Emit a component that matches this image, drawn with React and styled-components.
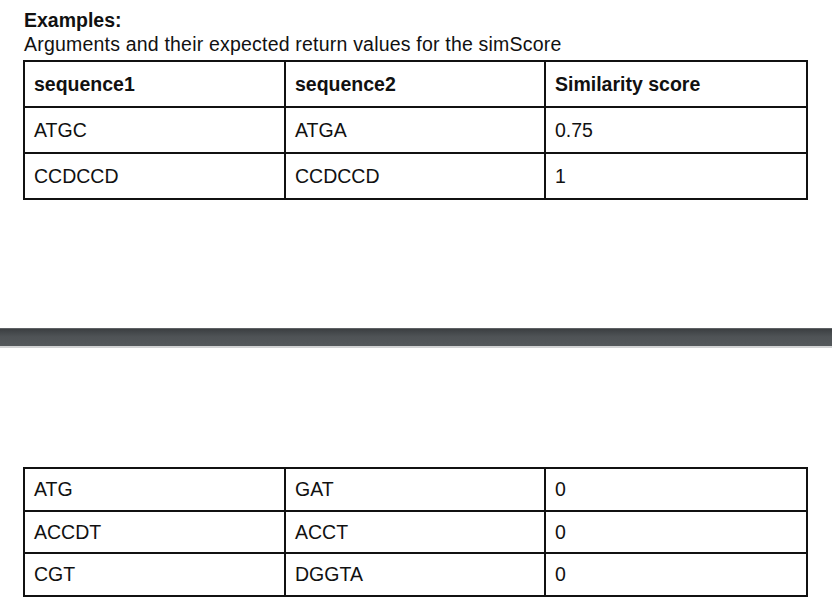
import React from 'react'
import styled, { createGlobalStyle } from 'styled-components'

const GlobalStyle = createGlobalStyle`
  html, body {
    margin: 0;
    padding: 0;
    background: #fff;
  }
  body {
    font-family: "Liberation Sans", Arial, sans-serif;
    color: #111;
  }
`

const topRows = [
    ['ATGC', 'ATGA', '0.75'],
    ['CCDCCD', 'CCDCCD', '1'],
]

const bottomRows = [
    ['ATG', 'GAT', '0'],
    ['ACCDT', 'ACCT', '0'],
    ['CGT', 'DGGTA', '0'],
]

function Cols() {
    return (
        <colgroup>
            <col style={{ width: 261 }} />
            <col style={{ width: 260 }} />
            <col style={{ width: 262 }} />
        </colgroup>
    )
}

function App() {
    return (
        <Page>
            <GlobalStyle />
            <Sheet>
                <Heading>Examples:</Heading>
                <Caption>Arguments and their expected return values for the simScore</Caption>
                <Table>
                    <Cols />
                    <tbody>
                        <Row $h={46}>
                            <HeadCell>sequence1</HeadCell>
                            <HeadCell>sequence2</HeadCell>
                            <HeadCell>Similarity score</HeadCell>
                        </Row>
                        {topRows.map((r, i) => (
                            <Row key={i} $h={46}>
                                {r.map((c, j) => <Cell key={j}>{c}</Cell>)}
                            </Row>
                        ))}
                    </tbody>
                </Table>
            </Sheet>

            <PageBreak />

            <Sheet $top={119}>
                <Table>
                    <Cols />
                    <tbody>
                        {bottomRows.map((r, i) => (
                            <Row key={i} $h={42.5}>
                                {r.map((c, j) => <Cell key={j}>{c}</Cell>)}
                            </Row>
                        ))}
                    </tbody>
                </Table>
            </Sheet>
        </Page>
    )
}

const Page = styled.div`
    width: 832px;
    height: 612px;
    overflow: hidden;
    display: flex;
    flex-direction: column;
`

const Sheet = styled.div`
    padding: ${p => p.$top || 10}px 26px 0 23px;
`

const Heading = styled.div`
    font-size: 19.5px;
    font-weight: 700;
    line-height: 21px;
    padding-left: 1px;
`

const Caption = styled.div`
    font-size: 19.5px;
    line-height: 20px;
    letter-spacing: 0.2px;
    padding-left: 1px;
    margin-top: 3px;
    margin-bottom: 6px;
`

const Table = styled.table`
    width: 783px;
    border-collapse: collapse;
    border: 2px solid #111;
    table-layout: fixed;
`

const Row = styled.tr`
    height: ${p => p.$h}px;
`

const Cell = styled.td`
    border: 2px solid #111;
    padding: 0 9px;
    font-size: 19.5px;
    line-height: 20px;
    vertical-align: middle;
    color: #111;
    white-space: nowrap;
`

const HeadCell = styled(Cell)`
    font-weight: 700;
`

const PageBreak = styled.div`
    margin-top: 128px;
    height: 17px;
    border-top: 1px solid #5e6164;
    border-bottom: 2px solid #d2d3d4;
    background: linear-gradient(#3c3f42 0%, #4f5356 45%, #54585b 100%);
`

export default App
